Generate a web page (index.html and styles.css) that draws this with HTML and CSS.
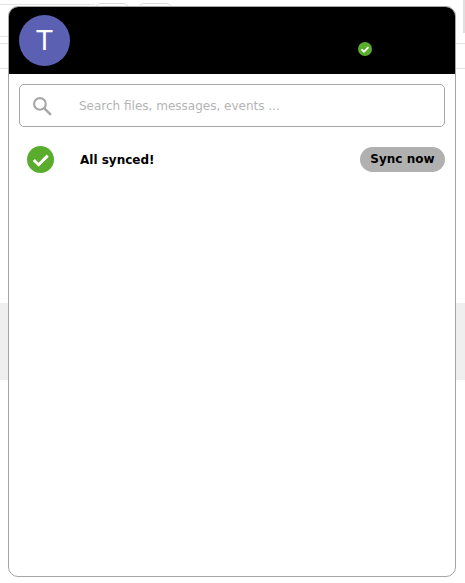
FILE: index.html
```html
<!DOCTYPE html>
<html lang="en">
<head>
    <meta charset="UTF-8">
    <title>Sync</title>
    <link rel="stylesheet" href="styles.css">
</head>
<body>
    <!-- page behind the popup -->
    <div class="backdrop">
        <div class="top-bar">
            <span class="top-rule"></span>
            <span class="top-tab"></span>
            <span class="top-tab"></span>
            <span class="top-edge"></span>
        </div>
        <div class="sub-bar"></div>
        <div class="grey-band"></div>
    </div>

    <div class="popup">
        <div class="popup-header">
            <div class="avatar">T</div>
            <svg class="header-status" viewBox="0 0 24 24">
                <circle cx="12" cy="12" r="12" fill="#5aad2c"/>
                <path d="M6 12.5l4.2 4.2L18 8.8" fill="none" stroke="#fff" stroke-width="3"/>
            </svg>
        </div>
        <div class="popup-body">
            <div class="search-box">
                <svg class="search-icon" viewBox="0 0 24 24">
                    <circle cx="9.5" cy="9.5" r="7" fill="none" stroke="#a8a8a8" stroke-width="2.6"/>
                    <path d="M14.8 14.8l7 7" fill="none" stroke="#a8a8a8" stroke-width="3" stroke-linecap="round"/>
                </svg>
                <span class="search-text">Search files, messages, events ...</span>
            </div>
            <div class="sync-row">
                <svg class="sync-icon" viewBox="0 0 28 28">
                    <circle cx="14" cy="14" r="14" fill="#5aad2c"/>
                    <path d="M7 14.5l5 5L21.5 10" fill="none" stroke="#fff" stroke-width="3"/>
                </svg>
                <span class="sync-text">All synced!</span>
                <button class="sync-button">Sync now</button>
            </div>
        </div>
    </div>
</body>
</html>
```

FILE: styles.css
```css
html, body {
    height: 100%;
}

body {
    margin: 0;
    font-family: "DejaVu Sans", sans-serif;
    background-color: #fff;
    overflow: hidden;
}

.backdrop {
    display: flex;
    flex-direction: column;
    height: 100%;
}

.top-bar {
    display: flex;
    height: 37px;
    padding-top: 3px;
    box-sizing: border-box;
    flex-shrink: 0;
}

.top-rule {
    width: 95px;
    height: 33px;
    margin-top: 1px;
    box-sizing: border-box;
    border-top: 1px solid #e4e4e4;
    border-bottom: 1px solid #e4e4e4;
}

.top-tab {
    width: 34px;
    height: 30px;
    margin-right: 9px;
    border: 1px solid #dcdcdc;
    border-radius: 6px;
    box-sizing: border-box;
}

.top-edge {
    width: 2px;
    height: 33px;
    margin: -3px 0 0 auto;
    background-color: #e0e0e0;
}

.sub-bar {
    height: 26px;
    margin-top: 6px;
    box-sizing: border-box;
    border-top: 1px solid #e4e4e4;
    border-bottom: 1px solid #e4e4e4;
    flex-shrink: 0;
}

.grey-band {
    height: 77px;
    margin-top: 234px;
    background-color: #efefef;
    flex-shrink: 0;
}

.popup {
    position: absolute;
    top: 6px;
    left: 8px;
    width: 448px;
    height: 571px;
    box-sizing: border-box;
    background-color: #fff;
    border: 1px solid #a6a6a6;
    border-radius: 10px;
    overflow: hidden;
}

.popup-header {
    position: relative;
    height: 67px;
    background-color: #000;
    padding: 8px 10px;
    box-sizing: border-box;
}

.avatar {
    display: flex;
    justify-content: center;
    align-items: center;
    width: 51px;
    height: 51px;
    border-radius: 50%;
    background-color: #5c60b2;
    color: #fff;
    font-size: 26px;
}

.header-status {
    position: absolute;
    top: 35px;
    left: 349px;
    width: 14px;
    height: 14px;
}

.popup-body {
    padding: 10px 10px;
}

.search-box {
    display: flex;
    align-items: center;
    height: 43px;
    box-sizing: border-box;
    border: 1px solid #a6a6a6;
    border-radius: 5px;
    padding-left: 12px;
}

.search-icon {
    width: 20px;
    height: 20px;
    flex-shrink: 0;
}

.search-text {
    margin-left: 27px;
    font-size: 12px;
    color: #b4b4b4;
}

.sync-row {
    display: flex;
    align-items: center;
    margin-top: 19px;
    height: 26px;
}

.sync-icon {
    width: 27px;
    height: 27px;
    margin-left: 8px;
    flex-shrink: 0;
}

.sync-text {
    margin-left: 26px;
    padding-top: 1px;
    font-size: 12px;
    font-weight: bold;
    color: #000;
}

.sync-button {
    margin-left: auto;
    height: 25px;
    padding: 0 10.5px;
    border: none;
    border-radius: 13px;
    background-color: #b0b0b0;
    color: #000;
    font-family: inherit;
    font-size: 12px;
    font-weight: bold;
}
```
